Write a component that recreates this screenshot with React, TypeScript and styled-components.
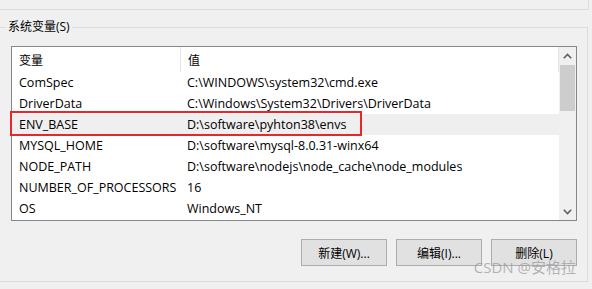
import React from 'react';
import styled, { createGlobalStyle } from 'styled-components';

interface EnvVar {
  name: string,
  value: string,
  marked?: boolean,
}

const vars: Array<EnvVar> = [
  { name: 'ComSpec', value: 'C:\\WINDOWS\\system32\\cmd.exe' },
  { name: 'DriverData', value: 'C:\\Windows\\System32\\Drivers\\DriverData' },
  { name: 'ENV_BASE', value: 'D:\\software\\pyhton38\\envs', marked: true },
  { name: 'MYSQL_HOME', value: 'D:\\software\\mysql-8.0.31-winx64' },
  { name: 'NODE_PATH', value: 'D:\\software\\nodejs\\node_cache\\node_modules' },
  { name: 'NUMBER_OF_PROCESSORS', value: '16' },
  { name: 'OS', value: 'Windows_NT' },
];

const App = () => {
  return (
    <>
      <GlobalStyle />
      <Page>
        <PrevGroup />
        <Group>
          <Legend>系统变量(S)</Legend>
          <ListBox>
            <ListArea>
              <HeaderRow>
                <HeadCell $first>变量</HeadCell>
                <HeadCell>值</HeadCell>
              </HeaderRow>
              {vars.map((v) => (
                <Row key={v.name} $selected={v.marked}>
                  <NameCell>{v.name}</NameCell>
                  <ValueCell>{v.value}</ValueCell>
                  {v.marked && <Marker />}
                </Row>
              ))}
            </ListArea>
            <Scrollbar>
              <Arrow>
                <svg width="9" height="6" viewBox="0 0 9 6">
                  <path d="M0.8 5.2 L4.5 1.5 L8.2 5.2" fill="none" stroke="#606060" strokeWidth="1.6" />
                </svg>
              </Arrow>
              <Track>
                <Thumb />
              </Track>
              <Arrow>
                <svg width="9" height="6" viewBox="0 0 9 6">
                  <path d="M0.8 0.8 L4.5 4.5 L8.2 0.8" fill="none" stroke="#606060" strokeWidth="1.6" />
                </svg>
              </Arrow>
            </Scrollbar>
          </ListBox>
          <Buttons>
            <Button>新建(W)...</Button>
            <Button>编辑(I)...</Button>
            <Button>删除(L)</Button>
          </Buttons>
          <Watermark>CSDN @安格拉</Watermark>
        </Group>
      </Page>
    </>
  )
};

const GlobalStyle = createGlobalStyle`
  html, body {
    margin: 0;
    padding: 0;
    background: #f0f0f0;
  }
  body {
    font-family: "Open Sans", "Noto Sans CJK SC", sans-serif;
    font-size: 12px;
    color: #000;
  }
`

const Page = styled.div`
  width: 592px;
  height: 289px;
  overflow: hidden;
  background: #f0f0f0;
`

const PrevGroup = styled.div`
  width: 588px;
  height: 9px;
  border-right: 1px solid #dcdcdc;
  border-bottom: 1px solid #dcdcdc;
`

const Group = styled.div`
  position: relative;
  margin-top: 17px;
  margin-left: -2px;
  width: 590px;
  height: 255px;
  border: 1px solid #dcdcdc;
  box-sizing: border-box;
  padding: 18px 0 0 12px;
`

const Legend = styled.div`
  position: absolute;
  top: -9px;
  left: 7px;
  padding: 0 2px 0 2px;
  background: #f0f0f0;
  line-height: 16px;
  color: #000;
`

const ListBox = styled.div`
  display: flex;
  width: 566px;
  height: 175px;
  box-sizing: border-box;
  border: 1px solid #828790;
  background: #fff;
  font-size: 12.5px;
`

const ListArea = styled.div`
  flex: 1;
  display: flex;
  flex-direction: column;
`

const HeaderRow = styled.div`
  display: flex;
  height: 25px;
  align-items: center;
  border-right: 1px solid #e5e5e5;
`

const HeadCell = styled.div<{ $first?: boolean }>`
  box-sizing: border-box;
  width: ${(p) => (p.$first ? '169px' : 'auto')};
  flex: ${(p) => (p.$first ? 'none' : '1')};
  padding-left: 7px;
  height: 100%;
  display: flex;
  align-items: center;
  font-size: 12px;
  border-right: ${(p) => (p.$first ? '1px solid #e5e5e5' : 'none')};
`

const Row = styled.div<{ $selected?: boolean }>`
  position: relative;
  display: flex;
  align-items: center;
  height: 21px;
  background: ${(p) => (p.$selected ? '#efefef' : 'transparent')};
`

const NameCell = styled.div`
  box-sizing: border-box;
  width: 169px;
  padding-left: 7px;
  white-space: nowrap;
`

const ValueCell = styled.div`
  flex: 1;
  padding-left: 6px;
  white-space: nowrap;
`

const Marker = styled.div`
  position: absolute;
  left: -2px;
  top: -3px;
  width: 352px;
  height: 25px;
  border: 2px solid #e8272a;
  box-sizing: border-box;
`

const Scrollbar = styled.div`
  width: 17px;
  display: flex;
  flex-direction: column;
  background: #f0f0f0;
`

const Arrow = styled.div`
  height: 17px;
  display: flex;
  align-items: center;
  justify-content: center;
`

const Track = styled.div`
  flex: 1;
  padding: 1px 1px 0 1px;
`

const Thumb = styled.div`
  height: 46px;
  background: #cdcdcd;
`

const Buttons = styled.div`
  display: flex;
  justify-content: flex-end;
  gap: 9px;
  width: 566px;
  margin-top: 18px;
`

const Button = styled.div`
  width: 86px;
  height: 27px;
  box-sizing: border-box;
  border: 1px solid #adadad;
  background: #e1e1e1;
  display: flex;
  align-items: center;
  justify-content: center;
`

const Watermark = styled.div`
  position: absolute;
  right: 11px;
  top: 228px;
  font-size: 15px;
  color: rgba(150, 150, 150, 0.7);
  white-space: nowrap;
`

export default App;
